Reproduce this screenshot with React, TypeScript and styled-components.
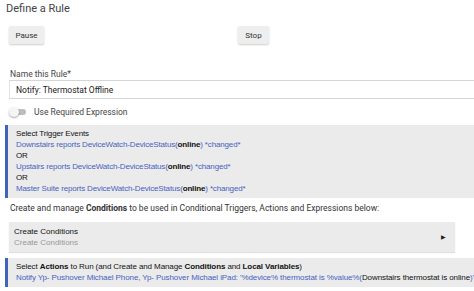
import styled, { createGlobalStyle } from "styled-components";

const Global = createGlobalStyle`
  body {
    margin: 0;
    background: #ffffff;
    font-family: Roboto, "Liberation Sans", sans-serif;
    color: #333333;
    overflow: hidden;
  }
`;

const Page = styled.div`
  width: 474px;
  height: 291px;
  overflow: hidden;
  padding-top: 2px;
`;

const Title = styled.div`
  font-size: 11px;
  color: #444444;
  padding: 0 6px;
  height: 14px;
  line-height: 14px;
`;

const Controls = styled.div`
  display: grid;
  grid-template-columns: 229px 1fr;
  padding: 10px 9px 0;
`;

const Button = styled.button<{ $w: number }>`
  width: ${(p) => p.$w}px;
  height: 18px;
  border: none;
  border-radius: 2px;
  background: #eeeeee;
  box-shadow: 0 1px 2px rgba(0, 0, 0, 0.2);
  font-family: Roboto, "Liberation Sans", sans-serif;
  font-size: 8px;
  color: #333333;
  padding: 0;
`;

const Field = styled.div`
  padding: 25px 9px 0;
`;

const Label = styled.div`
  font-size: 8.5px;
  color: #444444;
  padding-left: 1px;
  height: 11px;
`;

const Input = styled.div`
  height: 17px;
  border-top: 1px solid #d6d6d6;
  border-bottom: 1px solid #d6d6d6;
  border-left: 1px solid #e4e4e4;
  display: flex;
  align-items: center;
  padding-left: 6px;
  font-size: 8.5px;
  color: #222222;
  margin-right: -20px;
`;

const ToggleRow = styled.div`
  display: flex;
  align-items: center;
  gap: 8px;
  padding: 6px 10px 0;
  font-size: 8.5px;
  color: #444444;
  height: 14px;
`;

const Track = styled.div`
  position: relative;
  width: 16px;
  height: 6px;
  border-radius: 3px;
  background: #bdbdbd;
`;

const Knob = styled.span`
  position: absolute;
  left: -1px;
  top: -2px;
  width: 10px;
  height: 10px;
  border-radius: 50%;
  background: #f5f5f5;
  box-shadow: 0 1px 2px rgba(0, 0, 0, 0.35);
`;

const Panel = styled.div<{ $top: number; $ls: number }>`
  margin: ${(p) => p.$top}px 0 0 5px;
  background: #ebebeb;
  border-left: 3px solid #3f64b8;
  padding: 3px 0 4px 8px;
  font-family: Tahoma, "Liberation Sans", sans-serif;
  font-size: 8px;
  letter-spacing: ${(p) => p.$ls}px;
  line-height: 11px;
  color: #222222;
  white-space: nowrap;
`;

const Link = styled.div`
  color: #4762bf;
  b {
    color: #111111;
  }
`;

const Plain = styled.div`
  color: #111111;
`;

const Dark = styled.span`
  color: #111111;
`;

const Note = styled.div`
  padding: 5px 10px 0;
  font-size: 8.5px;
  color: #333333;
  height: 12px;
  white-space: nowrap;
`;

const CondBox = styled.div`
  margin: 7px 19px 0 9px;
  height: 30px;
  background: #ebebeb;
  box-shadow: 0 1px 1px rgba(0, 0, 0, 0.12);
  display: flex;
  align-items: center;
  justify-content: space-between;
  padding: 0 9px 0 5px;
  font-family: Tahoma, "Liberation Sans", sans-serif;
  font-size: 8px;
  line-height: 11px;
`;

const Muted = styled.div`
  color: #999999;
`;

const Arrow = styled.span`
  font-size: 6px;
  color: #222222;
`;

export default function App() {
  return (
    <Page>
      <Global />
      <Title>Define a Rule</Title>
      <Controls>
        <Button $w={35}>Pause</Button>
        <Button $w={31}>Stop</Button>
      </Controls>
      <Field>
        <Label>Name this Rule*</Label>
        <Input>Notify: Thermostat Offline</Input>
      </Field>
      <ToggleRow>
        <Track>
          <Knob />
        </Track>
        Use Required Expression
      </ToggleRow>
      <Panel $top={6} $ls={-0.15}>
        <Plain>Select Trigger Events</Plain>
        <Link>
          Downstairs reports DeviceWatch-DeviceStatus(<b>online</b>) *changed*
        </Link>
        <Plain>OR</Plain>
        <Link>
          Upstairs reports DeviceWatch-DeviceStatus(<b>online</b>) *changed*
        </Link>
        <Plain>OR</Plain>
        <Link>
          Master Suite reports DeviceWatch-DeviceStatus(<b>online</b>) *changed*
        </Link>
      </Panel>
      <Note>
        Create and manage <b>Conditions</b> to be used in Conditional Triggers,
        Actions and Expressions below:
      </Note>
      <CondBox>
        <div>
          <Plain>Create Conditions</Plain>
          <Muted>Create Conditions</Muted>
        </div>
        <Arrow>▶</Arrow>
      </CondBox>
      <Panel $top={6} $ls={-0.1}>
        <Plain>
          Select <b>Actions</b> to Run (and Create and Manage{" "}
          <b>Conditions</b> and <b>Local Variables</b>)
        </Plain>
        <Link>
          Notify Yp- Pushover Michael Phone, Yp- Pushover Michael iPad:
          '%device% thermostat is %value%(
          <Dark>Downstairs thermostat is online</Dark>
          )'
        </Link>
      </Panel>
    </Page>
  );
}
